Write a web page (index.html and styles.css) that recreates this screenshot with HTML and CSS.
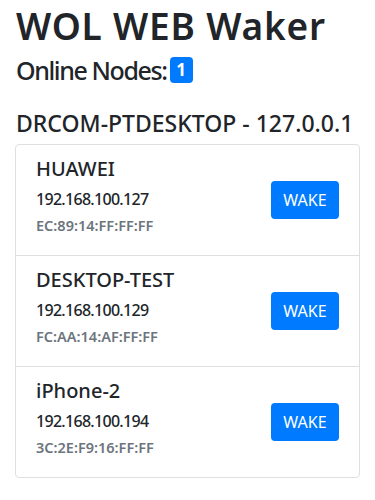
FILE: index.html
```html
<!DOCTYPE html>
<html>
<head>
<meta charset="utf-8">
<link rel="stylesheet" href="styles.css">
</head>
<body>
<div class="container">
  <h1 class="title">WOL WEB Waker</h1>
  <h3 class="online">Online Nodes:<span class="badge">1</span></h3>
  <h4 class="host">DRCOM-PTDESKTOP - 127.0.0.1</h4>
  <ul class="list">
    <li class="item">
      <div class="info">
        <h5 class="name">HUAWEI</h5>
        <div class="ip">192.168.100.127</div>
        <div class="mac">EC:89:14:FF:FF:FF</div>
      </div>
      <button class="btn">WAKE</button>
    </li>
    <li class="item">
      <div class="info">
        <h5 class="name">DESKTOP-TEST</h5>
        <div class="ip">192.168.100.129</div>
        <div class="mac">FC:AA:14:AF:FF:FF</div>
      </div>
      <button class="btn">WAKE</button>
    </li>
    <li class="item">
      <div class="info">
        <h5 class="name">iPhone-2</h5>
        <div class="ip">192.168.100.194</div>
        <div class="mac">3C:2E:F9:16:FF:FF</div>
      </div>
      <button class="btn">WAKE</button>
    </li>
  </ul>
</div>
</body>
</html>
```

FILE: styles.css
```css
* { box-sizing: border-box; }
body {
  margin: 0;
  font-family: "Noto Sans", "Open Sans", sans-serif;
  color: #212529;
  background: #fff;
}
.container { padding: 0 15px; }
.title {
  font-size: 37px;
  font-weight: 600;
  line-height: 42px;
  letter-spacing: 0.8px;
  margin: 5px 0 0 1px;
}
.online {
  font-size: 25px;
  font-weight: 500;
  line-height: 30px;
  letter-spacing: -1.4px;
  margin: 8px 0 0 1px;
  display: flex;
  align-items: center;
}
.badge {
  display: inline-flex;
  align-items: center;
  justify-content: center;
  width: 23px;
  height: 26px;
  margin-left: 3px;
  background: #007bff;
  color: #fff;
  border-radius: 4px;
  font-size: 17px;
  font-weight: 700;
  letter-spacing: 0;
}
.host {
  font-size: 23px;
  font-weight: 500;
  line-height: 28px;
  margin: 24px 0 7px 1px;
}
.list {
  list-style: none;
  margin: 0;
  padding: 0;
  border: 1px solid #dfdfdf;
  border-radius: 4px;
}
.item {
  display: flex;
  align-items: flex-start;
  justify-content: space-between;
  padding: 12px 20px 0 20px;
  height: 111px;
  border-bottom: 1px solid #dfdfdf;
}
.item:last-child { border-bottom: 0; height: 110px; }
.name {
  font-size: 20px;
  font-weight: 500;
  line-height: 24px;
  margin: 0;
}
.ip {
  font-size: 16px;
  font-weight: 500;
  line-height: 20px;
  letter-spacing: -0.7px;
  margin-top: 8px;
}
.mac {
  font-size: 14.5px;
  font-weight: 600;
  line-height: 20px;
  margin-top: 6px;
  color: #6c757d;
}
.btn {
  align-self: center;
  margin-top: -12px;
  background: #007bff;
  color: #fff;
  border: 0;
  border-radius: 4px;
  width: 68px;
  height: 38px;
  padding: 0;
  font-family: inherit;
  font-size: 16px;
  font-weight: 400;
}
```
